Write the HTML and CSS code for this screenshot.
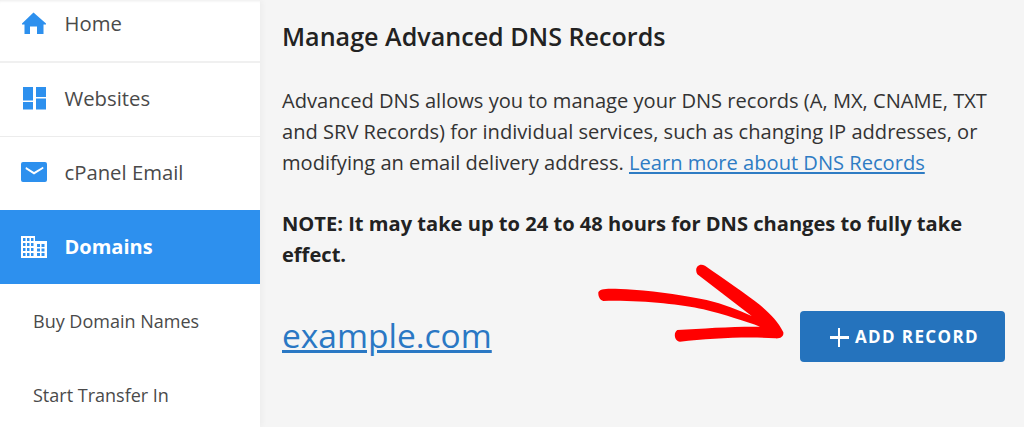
FILE: index.html
```html
<!DOCTYPE html>
<html lang="en">
<head>
    <meta charset="UTF-8">
    <meta name="viewport" content="width=device-width, initial-scale=1.0">
    <title>Manage Advanced DNS Records</title>
    <link rel="stylesheet" href="styles.css">
</head>
<body>

<div class="layout">
    <!-- Sidebar -->
    <nav class="sidebar">
        <a class="nav-item first" href="#">
            <svg class="nav-icon" viewBox="0 0 26 26"><path d="M12.500 2.500 L25 13.500 V14.500 H22.500 V24 H16 V16.500 H9 V24 H3.500 V14.500 H1 V13.500 Z"/></svg>
            <span>Home</span>
        </a>
        <a class="nav-item" href="#">
            <svg class="nav-icon" viewBox="0 0 26 26"><path d="M2 2 H12 V15.500 H2 Z M15 2 H25 V12 H15 Z M15 13.500 H25 V24.500 H15 Z M2 17 H12 V24.500 H2 Z"/></svg>
            <span>Websites</span>
        </a>
        <a class="nav-item" href="#">
            <svg class="nav-icon" viewBox="0 0 26 26"><path fill-rule="evenodd" d="M2 3 H24 Q26 3 26 5 V21 Q26 23 24 23 H2 Q0 23 0 21 V5 Q0 3 2 3 Z M5 8 L4.500 10 L13 15.500 L22.500 9.500 L22 7.800 L13 13 Z"/></svg>
            <span>cPanel Email</span>
        </a>
        <a class="nav-item active" href="#">
            <svg class="nav-icon" viewBox="0 0 26 26"><path fill-rule="evenodd" d="M0 3 H14 V8 H26 V25 H0 Z M2 5 V8 H4.500 V5 Z M6 5 V8 H8.500 V5 Z M10 5 V8 H12.500 V5 Z M2 10 V13 H4.500 V10 Z M6 10 V13 H8.500 V10 Z M10 10 V13 H12.500 V10 Z M2 15 V18 H4.500 V15 Z M6 15 V18 H8.500 V15 Z M10 15 V18 H12.500 V15 Z M2 20 V23 H4.500 V20 Z M6 20 V23 H8.500 V20 Z M10 20 V23 H12.500 V20 Z M16 11 V14 H19 V11 Z M20.500 11 V14 H23.500 V11 Z M16 15.500 V18.500 H19 V15.500 Z M20.500 15.500 V18.500 H23.500 V15.500 Z M16 20 V23 H19 V20 Z M20.500 20 V23 H23.500 V20 Z"/></svg>
            <span>Domains</span>
        </a>
        <a class="nav-item sub" href="#">Buy Domain Names</a>
        <a class="nav-item sub" href="#">Start Transfer In</a>
    </nav>

    <!-- Main content -->
    <main class="content">
        <h1>Manage Advanced DNS Records</h1>
        <p>Advanced DNS allows you to manage your DNS records (A, MX, CNAME, TXT and SRV Records) for individual services, such as changing IP addresses, or modifying an email delivery address. <a href="#">Learn more about DNS Records</a></p>
        <p class="note">NOTE: It may take up to 24 to 48 hours for DNS changes to fully take effect.</p>
        <div class="domain-row">
            <a class="domain" href="#">example.com</a>
            <button class="add-record"><span class="plus"></span>ADD RECORD</button>
        </div>
    </main>
</div>

<!-- Red arrow drawn over the page -->
<svg class="arrow" viewBox="0 0 900 360">
    <path d="M25 112 C30 98 60 100 130 104 C210 110 290 122 350 135 C400 147 445 165 485 183 L322 58 C312 40 325 22 345 32 C400 70 470 118 510 150 C540 175 565 200 580 232 C582 245 570 252 555 250 C470 244 360 250 270 260 C252 258 250 232 262 225 C340 220 430 214 510 215 C470 200 400 178 340 163 C270 148 150 135 40 138 C30 135 24 124 25 112 Z"/>
</svg>

</body>
</html>
```

FILE: styles.css
```css
* {
    margin: 0;
    padding: 0;
    box-sizing: border-box;
}

html, body {
    height: 100%;
    overflow: hidden;
}

body {
    font-family: 'Open Sans', sans-serif;
    background-color: #f5f5f5;
    color: #333;
}

.layout {
    display: flex;
    height: 427px;
}

/* Sidebar */
.sidebar {
    width: 260px;
    flex-shrink: 0;
    background-color: #fff;
    overflow: hidden;
    box-shadow: 2px 0 6px rgba(0, 0, 0, 0.04), inset 0 3px 3px -2px rgba(0, 0, 0, 0.08);
}

.nav-item {
    display: flex;
    align-items: center;
    height: 74px;
    padding-left: 21px;
    padding-bottom: 3px;
    font-size: 20.3px;
    color: #4a4a4a;
    text-decoration: none;
    border-bottom: 1px solid #ececec;
}

.nav-item.first {
    height: 63px;
    padding-bottom: 15px;
    border-bottom: 2px solid #f0f0f0;
}

.nav-icon {
    width: 26px;
    height: 26px;
    margin-right: 17.5px;
    fill: #2d90ee;
}

.nav-item.active {
    height: 74px;
    margin-top: -1px;
    padding-bottom: 2px;
    font-size: 20px;
    background-color: #2d90ee;
    color: #fff;
    font-weight: 700;
    border-bottom: none;
}

.nav-item.active .nav-icon {
    fill: #fff;
}

.nav-item.sub {
    padding-left: 33px;
    padding-bottom: 0;
    font-size: 18px;
    border-bottom: none;
}

/* Main content */
.content {
    flex: 1;
    padding: 19px 19px 0 22px;
}

h1 {
    font-size: 25.1px;
    font-weight: 600;
    line-height: 34px;
    color: #222;
    margin-bottom: 32px;
}

p {
    font-size: 20.1px;
    line-height: 31px;
    margin-bottom: 30px;
}

p a {
    color: #2e7cc4;
}

.note {
    font-weight: 700;
    color: #222;
    margin-bottom: 0;
}

.domain-row {
    display: flex;
    align-items: center;
    justify-content: space-between;
    margin-top: 41px;
}

.domain {
    margin-bottom: 4px;
    font-size: 33.5px;
    color: #2a78c4;
}

.add-record {
    display: flex;
    align-items: center;
    justify-content: center;
    width: 205px;
    height: 51px;
    padding-left: 4px;
    background-color: #2573bd;
    color: #fff;
    font-family: inherit;
    font-size: 17px;
    font-weight: 700;
    letter-spacing: 1.4px;
    border: none;
    border-radius: 4px;
    cursor: pointer;
}

.plus {
    position: relative;
    width: 19px;
    height: 19px;
    margin-top: 2px;
    margin-right: 6px;
}

.plus::before, .plus::after {
    content: '';
    position: absolute;
    background-color: #fff;
}

.plus::before {
    left: 0;
    right: 0;
    top: 8px;
    height: 2.5px;
}

.plus::after {
    top: 0;
    bottom: 0;
    left: 8px;
    width: 2.5px;
}

/* Arrow overlay */
.arrow {
    position: absolute;
    left: 590px;
    top: 255px;
    width: 300px;
    height: 120px;
    fill: #f00;
}
```
